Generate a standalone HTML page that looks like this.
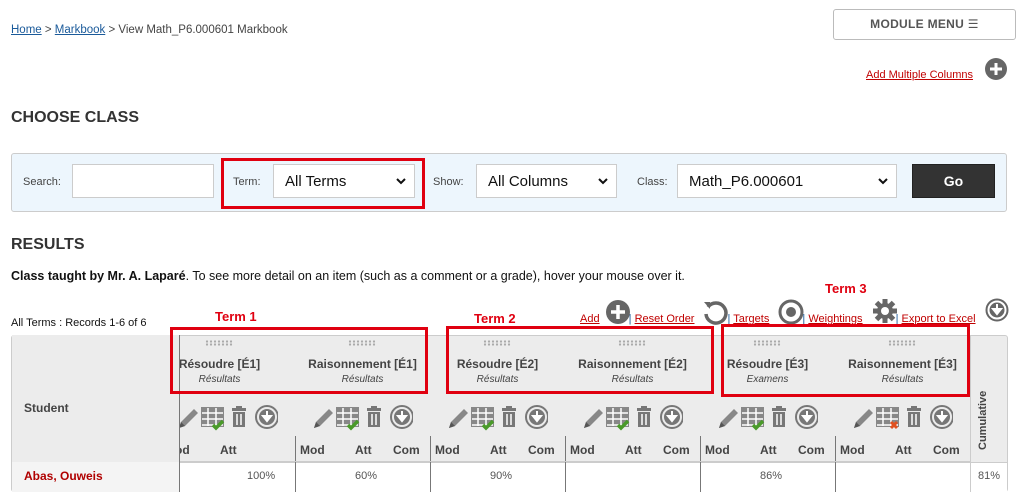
<!DOCTYPE html>
<html><head><meta charset="utf-8"><style>
*{box-sizing:border-box;margin:0;padding:0}
body{width:1024px;height:492px;overflow:hidden;background:#fff;font-family:"Liberation Sans",sans-serif;color:#222;position:relative}
.a{position:absolute}
a{color:#c00000}
.sel{position:absolute;height:34px;background:#fff;border:1px solid #ccc;font-size:15px;padding:8px 11px;color:#111}
.sel svg{position:absolute;right:8px;top:13px}
.lbl{position:absolute;font-size:11px;color:#444;top:176px}
.red{position:absolute;border:3px solid #e00010}
.t{position:absolute;font-size:12px;font-weight:bold;color:#444;text-align:center;width:135px}
.s{position:absolute;font-size:10px;font-style:italic;color:#444;text-align:center;width:135px}
.h{position:absolute;font-size:12px;font-weight:bold;color:#444;top:443px}
.v{position:absolute;font-size:11px;color:#555;top:470px}
.vl{position:absolute;width:1px;background:#777}
.g{position:absolute;width:28px;height:6px;background-image:radial-gradient(circle,#aaa 1px,transparent 1.3px);background-size:4px 3px}
</style></head><body>
<div class="a" style="left:11px;top:24px;font-size:11.5px;color:#444"><a href="#" style="color:#1a5a9a">Home</a> &gt; <a href="#" style="color:#1a5a9a">Markbook</a> &gt; View Math_P6.000601 Markbook</div>
<div class="a" style="left:833px;top:9px;width:183px;height:31px;border:1px solid #bbb;border-radius:3px;font-size:12px;font-weight:bold;color:#555;text-align:center;line-height:29px;letter-spacing:.3px">MODULE MENU <span style="font-weight:normal">☰</span></div>
<div class="a" style="left:866px;top:69px;font-size:11px"><a href="#">Add Multiple Columns</a></div>
<svg class="a" style="left:984px;top:57px" width="24" height="24"><circle cx="12" cy="12" r="11" fill="#666"/><path d="M12 6v12M6 12h12" stroke="#fff" stroke-width="3"/></svg>
<div class="a" style="left:11px;top:109px;font-size:16px;font-weight:bold;color:#333">CHOOSE CLASS</div>
<div class="a" style="left:11px;top:153px;width:996px;height:59px;background:#edf6fd;border:1px solid #ccc;border-radius:3px"></div>
<div class="lbl" style="left:23px">Search:</div>
<div class="a" style="left:72px;top:164px;width:142px;height:34px;background:#fff;border:1px solid #ccc"></div>
<div class="red" style="left:221px;top:158px;width:204px;height:51px"></div>
<div class="lbl" style="left:233px">Term:</div>
<div class="sel" style="left:273px;top:164px;width:142px">All Terms<svg width="10" height="7"><path d="M1 1l4 4 4-4" stroke="#111" stroke-width="2" fill="none"/></svg></div>
<div class="lbl" style="left:433px">Show:</div>
<div class="sel" style="left:476px;top:164px;width:141px">All Columns<svg width="10" height="7"><path d="M1 1l4 4 4-4" stroke="#111" stroke-width="2" fill="none"/></svg></div>
<div class="lbl" style="left:637px">Class:</div>
<div class="sel" style="left:677px;top:164px;width:220px">Math_P6.000601<svg width="10" height="7"><path d="M1 1l4 4 4-4" stroke="#111" stroke-width="2" fill="none"/></svg></div>
<div class="a" style="left:912px;top:164px;width:83px;height:34px;background:#333;border:1px solid #222;color:#fff;font-weight:bold;font-size:14px;text-align:center;line-height:32px">Go</div>
<div class="a" style="left:11px;top:236px;font-size:16px;font-weight:bold;color:#333">RESULTS</div>
<div class="a" style="left:11px;top:269px;font-size:12.5px;color:#111"><b>Class taught by Mr. A. Laparé</b>. To see more detail on an item (such as a comment or a grade), hover your mouse over it.</div>
<div class="a" style="left:11px;top:317px;font-size:11px;color:#111">All Terms : Records 1-6 of 6</div>
<div class="a" style="left:215px;top:309px;font-size:13px;font-weight:bold;color:#e00010">Term 1</div>
<div class="a" style="left:474px;top:311px;font-size:13px;font-weight:bold;color:#e00010">Term 2</div>
<div class="a" style="left:825px;top:281px;font-size:13px;font-weight:bold;color:#e00010">Term 3</div>
<div class="a" style="left:580px;top:313px;font-size:11px;color:#1a5a9a"><a href="#">Add</a> <span style="display:inline-block;width:26px"></span>| <a href="#">Reset Order</a> <span style="display:inline-block;width:30px"></span>| <a href="#">Targets</a> <span style="display:inline-block;width:30px"></span>| <a href="#">Weightings</a> <span style="display:inline-block;width:30px"></span>| <a href="#">Export to Excel</a></div>
<svg class="a" style="left:605px;top:299px" width="26" height="26"><circle cx="13" cy="13" r="12" fill="#666"/><path d="M13 6v14M6 13h14" stroke="#fff" stroke-width="3.5"/></svg>
<svg class="a" style="left:702px;top:299px" width="26" height="26"><path d="M6 8A10 10 0 1 1 4 15" stroke="#666" stroke-width="3.5" fill="none"/><path d="M2 3l6 0 0 7z" fill="#666"/></svg>
<svg class="a" style="left:778px;top:299px" width="26" height="26"><circle cx="13" cy="13" r="11" stroke="#666" stroke-width="3" fill="none"/><circle cx="13" cy="13" r="5" fill="#666"/></svg>
<svg class="a" style="left:872px;top:298px" width="26" height="26"><circle cx="13" cy="13" r="8" fill="#666"/><path d="M13 1v24M1 13h24M4.5 4.5l17 17M21.5 4.5l-17 17" stroke="#666" stroke-width="5"/><circle cx="13" cy="13" r="4" fill="#fff"/></svg>
<svg class="a" style="left:985px;top:298px" width="24" height="24"><circle cx="12" cy="12" r="10.5" stroke="#666" stroke-width="2" fill="none"/><circle cx="12" cy="12" r="7.5" fill="#666"/><path d="M12 6v7M8 11l4 5 4-5z" stroke="#fff" stroke-width="2" fill="#fff"/></svg>
<!-- table -->
<div class="a" style="left:11px;top:335px;width:997px;height:157px;background:#ececec;border:1px solid #ccc;border-radius:3px"></div>
<div class="a" style="left:12px;top:462px;width:995px;height:30px;background:#fff;border-top:1px solid #ccc"></div>
<div class="a" style="left:12px;top:462px;width:167px;height:30px;background:#f4f4f4"></div>
<div class="a" style="left:24px;top:401px;font-size:12px;font-weight:bold;color:#444">Student</div>
<div class="a" style="left:24px;top:469px;font-size:12px;font-weight:bold;color:#b00000">Abas, Ouweis</div>
<div id="cols"></div>
<div class="a" style="left:12px;top:335px;width:167px;height:127px;background:#ececec;z-index:1"></div>
<div class="a" style="left:24px;top:401px;font-size:12px;font-weight:bold;color:#444;z-index:2">Student</div>
<div class="vl" style="left:179px;top:335px;height:157px;z-index:2"></div>
<div class="vl" style="left:295px;top:436px;height:56px"></div>
<div class="vl" style="left:430px;top:436px;height:56px"></div>
<div class="vl" style="left:565px;top:436px;height:56px"></div>
<div class="vl" style="left:700px;top:436px;height:56px"></div>
<div class="vl" style="left:835px;top:436px;height:56px"></div>
<div class="a" style="left:970px;top:336px;width:1px;height:156px;background:#ccc"></div>
<div class="a" style="left:977px;top:450px;font-size:11px;font-weight:bold;color:#444;transform:rotate(-90deg);transform-origin:0 0">Cumulative</div>
<div class="a" style="left:180px;top:461px;width:790px;height:1px;background:#ccc"></div>
<div class="v" style="left:247px">100%</div>
<div class="v" style="left:355px">60%</div>
<div class="v" style="left:490px">90%</div>
<div class="v" style="left:760px">86%</div>
<div class="v" style="left:978px">81%</div>
<div class="red" style="left:170px;top:327px;width:258px;height:67px;z-index:3"></div>
<div class="red" style="left:446px;top:326px;width:268px;height:68px"></div>
<div class="red" style="left:721px;top:324px;width:249px;height:73px"></div>
<script>
var T=[["Résoudre [É1]","Résultats"],["Raisonnement [É1]","Résultats"],["Résoudre [É2]","Résultats"],["Raisonnement [É2]","Résultats"],["Résoudre [É3]","Examens"],["Raisonnement [É3]","Résultats"]];
var h="";
for(var i=0;i<6;i++){var L=160+135*i;
var tx=i==0?L-8:L;
h+='<div class="g" style="left:'+(tx+53)+'px;top:340px"></div>';
h+='<div class="t" style="left:'+tx+'px;top:357px">'+T[i][0]+'</div><div class="s" style="left:'+tx+'px;top:374px">'+T[i][1]+'</div>';
var mark=i==5?'<path d="M40 19l6 6M46 19l-6 6" stroke="#e05020" stroke-width="3"/>':'<path d="M37 22l3 3 7-7" stroke="#4a9a2a" stroke-width="3.5" fill="none"/>';
h+='<svg class="a" style="left:'+(L+16)+'px;top:403px" width="102" height="32"><path d="M3 25l2-6 13-13 4 4-13 13z" fill="#888"/><path d="M3 25l2-6 4 4z" fill="#555"/>'+
'<rect x="25" y="4" width="23" height="20" fill="#888"/><path d="M26 10h21M26 16h21M26 22h21M32 5v18M40 5v18" stroke="#fff" stroke-width="1.5"/>'+mark+
'<rect x="56" y="5" width="14" height="3" fill="#777"/><rect x="60" y="3" width="6" height="3" fill="#777"/><rect x="57" y="9" width="12" height="15" fill="#777"/><path d="M61 11v11M65 11v11" stroke="#fff" stroke-width="1.5"/>'+
'<circle cx="91" cy="14" r="11" stroke="#777" stroke-width="2" fill="none"/><circle cx="91" cy="14" r="8" fill="#777"/><path d="M91 8v7M87 13l4 5 4-5z" stroke="#fff" stroke-width="2" fill="#fff"/></svg>';
h+='<div class="h" style="left:'+(L+5)+'px">Mod</div><div class="h" style="left:'+(L+60)+'px">Att</div>';
if(i>0)h+='<div class="h" style="left:'+(L+98)+'px">Com</div>';
}
document.getElementById("cols").innerHTML=h;
</script>
</body></html>
